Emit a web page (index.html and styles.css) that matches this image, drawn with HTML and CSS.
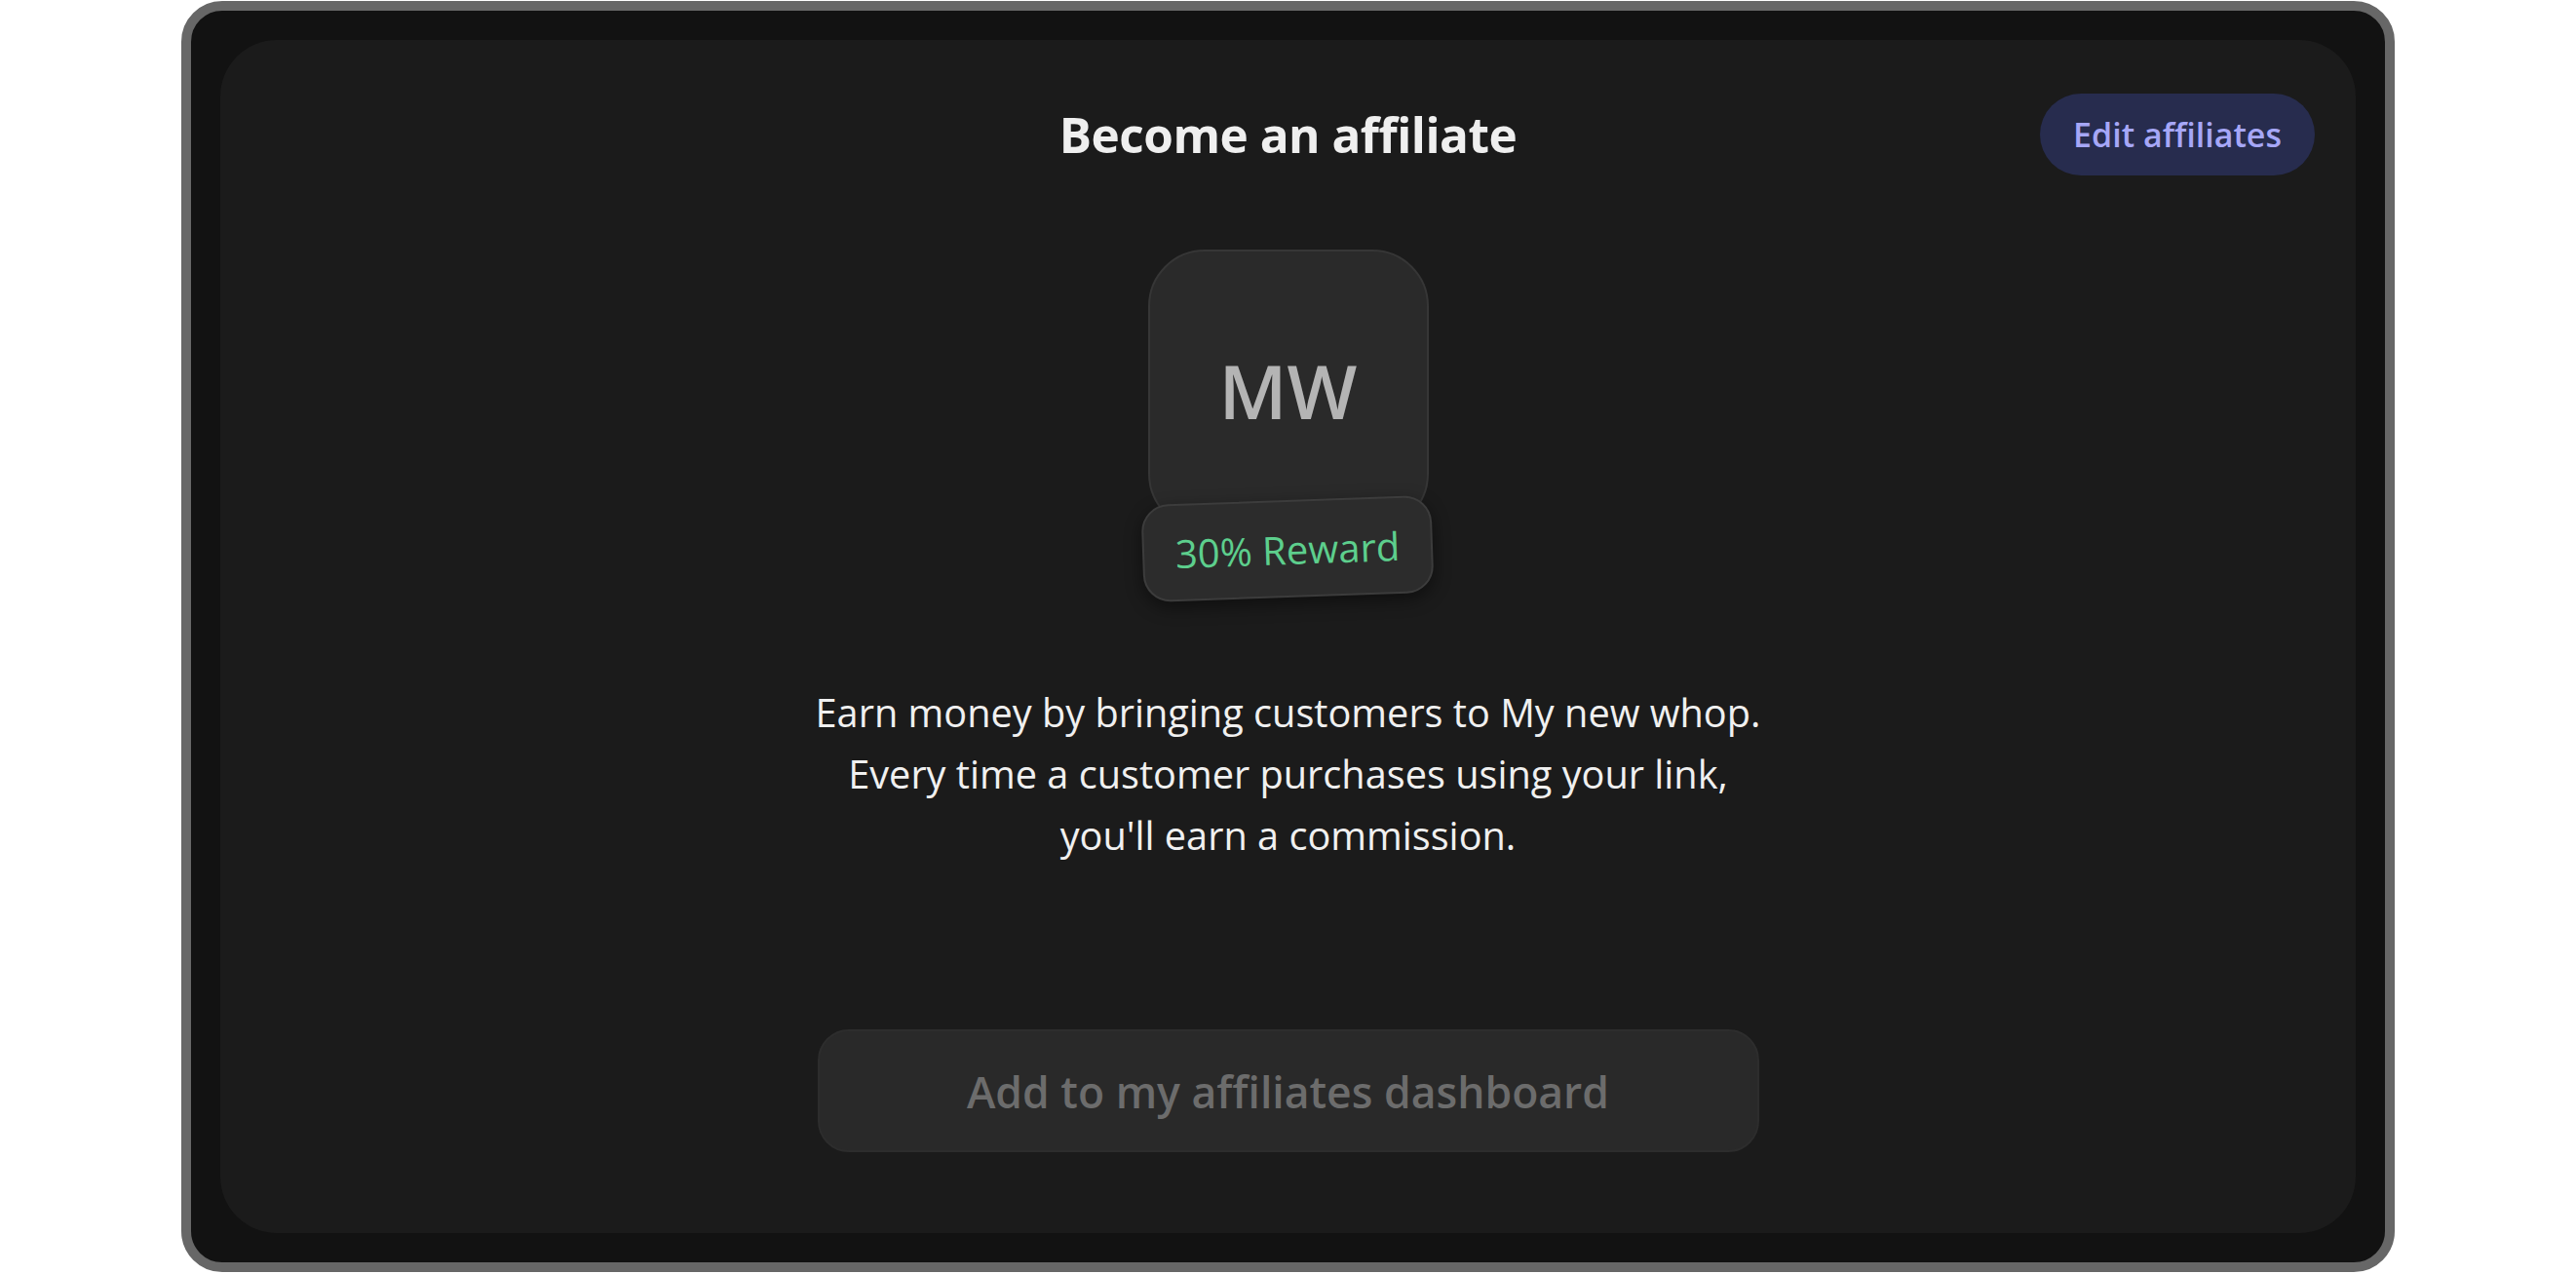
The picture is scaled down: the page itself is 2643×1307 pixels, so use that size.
FILE: index.html
```html
<!DOCTYPE html>
<html lang="en">
<head>
  <meta charset="UTF-8" />
  <meta name="viewport" content="width=device-width, initial-scale=1.0"/>
  <title>Become an affiliate</title>
  <link rel="stylesheet" href="styles.css">
</head>
<body>
  <div class="device-frame">
    <div class="affiliate-panel">
      <div class="panel-header">
        <h1>Become an affiliate</h1>
        <button class="edit-button">Edit affiliates</button>
      </div>

      <div class="avatar-wrap">
        <div class="avatar-card">MW</div>
        <div class="reward-badge">30% Reward</div>
      </div>

      <p class="affiliate-text">
        Earn money by bringing customers to My new whop.<br>
        Every time a customer purchases using your link,<br>
        you'll earn a commission.
      </p>

      <button class="dashboard-button" disabled>Add to my affiliates dashboard</button>
    </div>
  </div>
</body>
</html>
```

FILE: styles.css
```css
* {
  margin: 0;
  padding: 0;
  box-sizing: border-box;
  font-family: 'Open Sans', 'Noto Sans', 'Liberation Sans', sans-serif;
}

body {
  background-color: white;
  height: 100vh;
  display: flex;
  justify-content: center;
  padding-top: 1px;
  overflow: hidden;
}

.device-frame {
  width: 2271px;
  height: 1304px;
  border: 10px solid #676767;
  border-radius: 42px;
  background-color: #121212;
  padding: 30px;
}

.affiliate-panel {
  height: 100%;
  background-color: #1b1b1b;
  border-radius: 58px;
  display: flex;
  flex-direction: column;
  align-items: center;
}

.panel-header {
  width: 100%;
  display: grid;
  grid-template-columns: 1fr auto 1fr;
  align-items: center;
  padding: 55px 42px 0;
}

.panel-header h1 {
  grid-column: 2;
  color: #efefef;
  font-size: 49.5px;
  font-weight: 700;
  letter-spacing: -0.5px;
}

.edit-button {
  justify-self: end;
  height: 84px;
  padding: 0 34px;
  border: none;
  border-radius: 42px;
  background-color: #272c4e;
  color: #a6a7f7;
  font-size: 34px;
  font-weight: 600;
}

.avatar-wrap {
  position: relative;
  width: 300px;
  height: 361px;
  margin-top: 76px;
  display: flex;
  justify-content: center;
}

.avatar-card {
  width: 288px;
  height: 288px;
  border-radius: 58px;
  border: 2px solid #363636;
  background-color: #2a2a2a;
  color: #b4b4b4;
  font-size: 76px;
  font-weight: 600;
  display: flex;
  justify-content: center;
  align-items: center;
}

.reward-badge {
  position: absolute;
  bottom: 4px;
  left: 0;
  width: 298px;
  height: 100px;
  border-radius: 28px;
  border: 2px solid #3c3c3c;
  background-color: #2c2c2c;
  box-shadow: 0 6px 18px rgba(0, 0, 0, 0.45);
  transform: rotate(-2deg);
  color: #5dcf8d;
  font-size: 40px;
  font-weight: 500;
  display: flex;
  justify-content: center;
  align-items: center;
}

.affiliate-text {
  margin-top: 83px;
  color: #f0f0f0;
  font-size: 39.7px;
  line-height: 63px;
  text-align: center;
}

.dashboard-button {
  margin-top: 167px;
  width: 966px;
  height: 126px;
  border: 2px solid #2d2d2d;
  border-radius: 32px;
  background-color: #292929;
  color: #6c6c6c;
  font-size: 44.5px;
  font-weight: 600;
}
```
